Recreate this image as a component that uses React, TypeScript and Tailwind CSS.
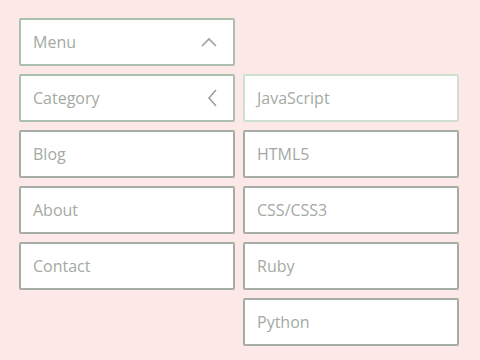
import React from 'react';

const left = ['Blog', 'About', 'Contact'];
const right = ['HTML5', 'CSS/CSS3', 'Ruby', 'Python'];

function Item({ label, tone = 'grey', children }: { label: string; tone?: 'grey' | 'green' | 'light'; children?: React.ReactNode }) {
  const border =
    tone === 'green' ? 'border-[#adbfad]' : tone === 'light' ? 'border-[#cfe0cf]' : 'border-[#a6aca6]';
  return (
    <div className={`h-12 w-[216px] flex items-center justify-between bg-white border-2 ${border} rounded-[2px] pl-3 pr-4 text-[#a3aaa3]`}>
      <span>{label}</span>
      {children}
    </div>
  );
}

export default function App() {
  return (
    <div className="w-[480px] h-[360px] bg-[#fce8e6] pt-[18px] pl-[19px] text-[16px] overflow-hidden" style={{ fontFamily: '"Open Sans", "Noto Sans", sans-serif' }}>
      <div className="flex gap-2">
        <div className="flex flex-col gap-2">
          <Item label="Menu" tone="green">
            <svg width="16" height="10" viewBox="0 0 16 10" fill="none" stroke="#9aa39a" strokeWidth="1.6">
              <path d="M1 9 L8 2 L15 9" />
            </svg>
          </Item>
          <Item label="Category" tone="green">
            <svg width="10" height="18" viewBox="0 0 10 18" fill="none" stroke="#9aa39a" strokeWidth="1.6">
              <path d="M9 1 L2 9 L9 17" />
            </svg>
          </Item>
          {left.map((l) => (
            <Item key={l} label={l} />
          ))}
        </div>
        <div className="flex flex-col gap-2 pt-14">
          <Item label="JavaScript" tone="light" />
          {right.map((l) => (
            <Item key={l} label={l} />
          ))}
        </div>
      </div>
    </div>
  );
}
